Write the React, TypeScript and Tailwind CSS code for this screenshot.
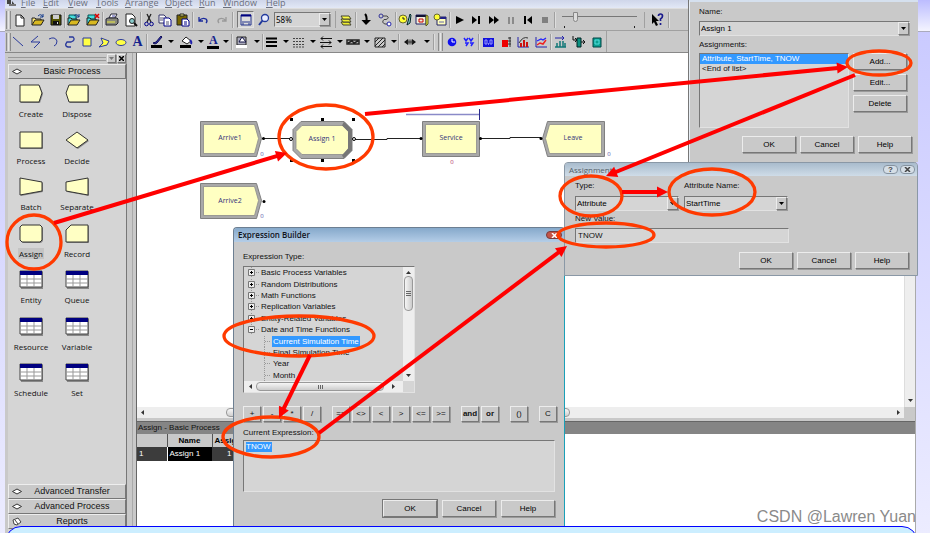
import React from "react";

const UI = "font-['Liberation_Sans',sans-serif]";
const RAISED =
  "border border-t-[#ececec] border-l-[#ececec] border-r-[#777] border-b-[#777] bg-[#c9c9c9] shadow-[1px_1px_0_#9a9a9a]";
const SUNKEN =
  "border border-t-[#777] border-l-[#777] border-r-[#e2e2e2] border-b-[#e2e2e2] bg-[#d5d5d5]";

/* ---------- small parts ---------- */

function Ico({ children, w = 16 }: { children: React.ReactNode; w?: number }) {
  return (
    <svg width={w} height="16" viewBox={`0 0 ${w} 16`} fill="none" aria-hidden="true">
      {children}
    </svg>
  );
}

function Tool({ name, children }: { name: string; children: React.ReactNode }) {
  return (
    <button type="button" aria-label={name} className="flex h-4 shrink-0 items-center justify-center">
      {children}
    </button>
  );
}

function Group({ w, children }: { w: string; children: React.ReactNode }) {
  return (
    <div className={`flex h-4 shrink-0 items-center justify-around border-r border-[#a0a0a0] shadow-[1px_0_0_#dedede] ${w}`}>
      {children}
    </div>
  );
}

function Grip() {
  return (
    <div className="flex h-[18px] shrink-0 gap-px">
      <span className="w-px bg-[#8c8c8c]" />
      <span className="w-px bg-[#e6e6e6]" />
      <span className="w-px bg-[#8c8c8c]" />
    </div>
  );
}

function Drop({ name }: { name: string }) {
  return (
    <Tool name={`${name} options`}>
      <Ico w={6}>
        <path d="M0 6h6L3 9z" fill="#000" />
      </Ico>
    </Tool>
  );
}

function Btn({ children, className = "w-[54px]" }: { children: React.ReactNode; className?: string }) {
  return (
    <button type="button" className={`flex h-[17px] items-center justify-center text-[8px] text-black ${RAISED} ${className}`}>
      {children}
    </button>
  );
}

function Combo({ id, value, className }: { id: string; value: string; className: string }) {
  return (
    <div className={`flex h-[15px] items-stretch ${SUNKEN} ${className}`}>
      <select id={id} defaultValue={value} className="min-w-0 flex-1 appearance-none bg-transparent pl-px text-[8px] leading-[13px] text-black outline-none">
        <option>{value}</option>
      </select>
      <span className={`flex w-[11px] items-center justify-center ${RAISED}`}>
        <svg width="5" height="3" aria-hidden="true">
          <path d="M0 0h5L2.500 3z" fill="#000" />
        </svg>
      </span>
    </div>
  );
}

/* ---------- toolbars ---------- */

const menus = ["File", "Edit", "View", "Tools", "Arrange", "Object", "Run", "Window", "Help"];

function MenuBar() {
  return (
    <nav className="flex h-2 shrink-0 items-end overflow-hidden bg-gradient-to-b from-[#cfd6ea] to-[#e2e8f6] pl-px font-['Open_Sans','Noto_Sans',sans-serif] text-[9px] leading-[10px] text-[#6b6f7c]">
      <svg width="12" height="8" viewBox="0 0 12 8" className="mr-[3px]" aria-hidden="true">
        <path d="M1 0h4v4H1zM6 1l4 5H6z" fill="#444" />
        <path d="M3 4h7v2H3z" fill="#777" />
      </svg>
      <div className="grid grid-cols-[22px_25px_28px_29px_40px_34px_24px_43px_24px]">
        {menus.map((m) => (
          <button key={m} type="button" className="text-left">
            <span className="underline">{m[0]}</span>
            {m.slice(1)}
          </button>
        ))}
      </div>
    </nav>
  );
}

function FolderArt({ flag }: { flag?: "arrow" | "cross" }) {
  return (
    <>
      {flag && <path d="M3 3h7v6H3z" fill="#4dd" stroke="#055" />}
      <path d="M2 13V6h3l1 1h5v2" fill={flag ? "#4dd" : "#ffe97a"} stroke="#222" />
      <path d="M2 13l3-5h9l-3 5z" fill="#d8b820" stroke="#222" />
      {flag === "cross" ? (
        <path d="M10 2l4 4M14 2l-4 4" stroke="#d00" strokeWidth="1.500" />
      ) : (
        <path d="M8 4q3-3 5 1M13 2v3h-3" stroke="#123a8c" />
      )}
    </>
  );
}

function StandardBar() {
  return (
    <div className="flex h-[22px] shrink-0 items-center border-t border-[#dedede] pl-px">
      <Grip />
      <Group w="w-[54px]">
        <Tool name="New"><Ico w={14}><path d="M3 3h5l3 3v8H3z" fill="#fff" stroke="#222" /><path d="M8 3v3h3" stroke="#222" /></Ico></Tool>
        <Tool name="Open"><Ico><FolderArt /></Ico></Tool>
        <Tool name="Save"><Ico w={14}><path d="M2 3h10v10H2z" fill="#555500" stroke="#111" /><path d="M4 3h6v4H4z" fill="#ccc" /><path d="M4 9h6v4H4z" fill="#111" /><path d="M8 10h1v2H8z" fill="#ddd" /></Ico></Tool>
      </Group>
      <Group w="w-[38px]">
        <Tool name="Attach template"><Ico><FolderArt flag="arrow" /></Ico></Tool>
        <Tool name="Detach template"><Ico><FolderArt flag="cross" /></Ico></Tool>
      </Group>
      <Group w="w-[38px]">
        <Tool name="Print"><Ico><path d="M5 6l2-4h6l-2 4z" fill="#fff" stroke="#223" /><path d="M2 7l2-1h9l1 1v4l-2 2H2z" fill="#88887a" stroke="#223" /><path d="M3 10h8" stroke="#ee4" /><path d="M8 4h3" stroke="#44a" /></Ico></Tool>
        <Tool name="Print preview"><Ico><path d="M3 2h6l3 3v9H3z" fill="#fff" stroke="#222" /><circle cx="9" cy="9" r="2.500" fill="#8cc" stroke="#222" /><path d="M11 11l3 3" stroke="#111" strokeWidth="2" /></Ico></Tool>
      </Group>
      <Group w="w-[52px]">
        <Tool name="Cut"><Ico w={14}><path d="M5 2l4 8M9 2l-4 8" stroke="#222" strokeWidth="1.300" /><circle cx="4.500" cy="12" r="1.800" stroke="#008" /><circle cx="9.500" cy="12" r="1.800" stroke="#008" /></Ico></Tool>
        <Tool name="Copy"><Ico><path d="M2 3h5l2 2v6H2z" fill="#fff" stroke="#336" /><path d="M7 6h5l2 2v6H7z" fill="#fff" stroke="#008" /><path d="M3 6h4M3 8h3M9 10h3M9 12h3" stroke="#557" /></Ico></Tool>
        <Tool name="Paste"><Ico><path d="M2 3h10v10H2z" fill="#776600" stroke="#222" /><path d="M5 2h4v2H5z" fill="#ee8" stroke="#222" /><path d="M7 7h5l2 2v5H7z" fill="#fff" stroke="#008" /><path d="M9 10h3M9 12h3" stroke="#008" /></Ico></Tool>
      </Group>
      <Group w="w-[40px]">
        <Tool name="Undo"><Ico w={14}><path d="M3 5v4h4M3 9q3-4 7-2 2 2 0 4" stroke="#1a2a9c" strokeWidth="1.300" /></Ico></Tool>
        <Tool name="Redo"><Ico w={14}><path d="M11 5v4H7M11 9Q8 5 4 7q-2 2 0 4" stroke="#999" strokeWidth="1.300" /></Ico></Tool>
      </Group>
      <div className="flex w-[103px] shrink-0 items-center border-r border-[#a0a0a0] pl-1">
        <button type="button" aria-label="Split view" className={`flex h-[17px] w-[17px] items-center justify-center ${SUNKEN}`}>
          <Ico w={14}><path d="M2 3h10v10H2z" fill="#ddd" stroke="#22338c" /><path d="M2 3.500h10" stroke="#000080" strokeWidth="2" /><path d="M3 10h8M4 11v2M10 11v2" stroke="#22338c" /></Ico>
        </button>
        <label htmlFor="zoom" aria-label="Zoom" className="flex w-5 justify-center">
          <Ico><circle cx="9" cy="6" r="3.500" fill="#e8ecff" stroke="#223a9c" strokeWidth="1.300" /><path d="M6.500 8.500L3 13" stroke="#223a9c" strokeWidth="2" /></Ico>
        </label>
        <Combo id="zoom" value="58%" className="w-[57px]" />
      </div>
      <Group w="w-[20px]">
        <Tool name="Layers"><Ico><path d="M3 10h8l2 3H5z" fill="#ee3" stroke="#443" /><path d="M3 7h8l2 3H5z" fill="#ee3" stroke="#443" /><path d="M3 4h8l2 3H5z" fill="#ff4" stroke="#443" /></Ico></Tool>
      </Group>
      <Group w="w-[40px]">
        <Tool name="Submodel"><Ico><path d="M7 2q2 2 1.500 7" stroke="#000" strokeWidth="2" /><path d="M3.500 8L8 13l5-5H9z" fill="#000" /></Ico></Tool>
        <Tool name="Connect"><Ico><circle cx="4" cy="4" r="2" stroke="#339" /><path d="M6 4h4q3 2-1 3.500H7q-3 3 1 4.500h3" stroke="#444" /><circle cx="12" cy="12" r="2" fill="#fff" stroke="#22a" /></Ico></Tool>
      </Group>
      <Group w="w-[54px]">
        <Tool name="Time patterns"><Ico><circle cx="6" cy="7" r="4" fill="#ff3" stroke="#663" /><path d="M6 5v2h2" stroke="#222" /><path d="M13 2l-3 11 3-2 1-8z" fill="#8cc" stroke="#022" /></Ico></Tool>
        <Tool name="Calendar"><Ico><path d="M2 3h10v9H2z" fill="#eed" stroke="#226" /><path d="M2 4h10" stroke="#113" strokeWidth="2" /><path d="M5 7h4v3H5z" stroke="#c00" /><path d="M12 3v11l2-2V4z" fill="#ff3" stroke="#552" /></Ico></Tool>
        <Tool name="Schedule"><Ico><path d="M5 5h9v8H5z" fill="#ffb" stroke="#226" /><path d="M5 6h9" stroke="#228" strokeWidth="2" /><circle cx="5" cy="5" r="3" fill="#ff3" stroke="#663" /><path d="M7 10h5" stroke="#66a" /></Ico></Tool>
      </Group>
      <Group w="w-[105px]">
        <Tool name="Go"><Ico w={14}><path d="M4 4l8 4-8 4z" fill="#000" /></Ico></Tool>
        <Tool name="Step"><Ico w={14}><path d="M3 4l5 4-5 4zM9 4h2v8H9z" fill="#000" /></Ico></Tool>
        <Tool name="Fast forward"><Ico w={14}><path d="M3 4l5 4-5 4zM8 4l5 4-5 4z" fill="#000" /></Ico></Tool>
        <Tool name="Pause"><Ico w={14}><path d="M4 5h2v7H4zM8 5h2v7H8z" fill="#8a8a8a" /></Ico></Tool>
        <Tool name="Start over"><Ico w={14}><path d="M11 4L6 8l5 4zM3 4h2v8H3z" fill="#000" /></Ico></Tool>
        <Tool name="End"><Ico w={14}><path d="M4 5h6v6H4z" fill="#808080" /></Ico></Tool>
      </Group>
      <div className="flex h-4 w-[90px] shrink-0 flex-col justify-between border-r border-[#a0a0a0] px-[7px]">
        <input
          type="range"
          aria-label="Animation speed"
          min={0}
          max={100}
          defaultValue={15}
          className="h-2.5 w-full appearance-none bg-[linear-gradient(#777,#777)] bg-[length:100%_1px] bg-center bg-no-repeat [&::-webkit-slider-thumb]:h-2.5 [&::-webkit-slider-thumb]:w-[5px] [&::-webkit-slider-thumb]:appearance-none [&::-webkit-slider-thumb]:rounded-b-sm [&::-webkit-slider-thumb]:border [&::-webkit-slider-thumb]:border-[#888] [&::-webkit-slider-thumb]:bg-[#ddd]"
        />
        <div className="flex justify-between px-[2px]">
          <span className="h-[2px] w-px bg-[#222]" />
          <span className="h-[2px] w-px bg-[#222]" />
        </div>
      </div>
      <Group w="w-[24px]">
        <Tool name="Context help"><Ico><path d="M3 2v10l2-2 2 4 2-1-2-4h3z" fill="#000" /><path d="M9.500 4q0-2 2-2t2 2-2 3v2M11.500 11v2" stroke="#1a1a8c" strokeWidth="1.700" /></Ico></Tool>
      </Group>
    </div>
  );
}

function LinesArt({ kind }: { kind: number }) {
  if (kind === 0) return <path d="M2 4.500h11M2 8h11M2 12h11" stroke="#000" strokeWidth="2" />;
  if (kind === 1) return <path d="M2 4.500h11M2 7.500h11M2 10.500h11M2 13h11" stroke="#444" strokeDasharray="2 1" />;
  if (kind === 2) return <path d="M3 4.500h11M2 8.500h11M3 12.500h11M5 2.500l-2 2 2 2M11 6.500l2 2-2 2M5 10.500l-2 2 2 2" stroke="#111" />;
  if (kind === 3) return <path d="M2 6h12v4H2zM3 9l4-2 2 2 4-2" stroke="#222" strokeWidth="1.500" />;
  return <path d="M3 4h10v9H3zM3 8l4-4M3 12l8-8M6 13l7-7M10 13l3-3" stroke="#222" />;
}

function DrawBar() {
  return (
    <div className="flex h-[22px] shrink-0 items-center border-t border-[#a0a0a0] pl-px">
      <Grip />
      <Group w="w-[136px]">
        <Tool name="Line"><Ico><path d="M2 3l10 9" stroke="#2a3a9c" /></Ico></Tool>
        <Tool name="Polyline"><Ico><path d="M10 2L3 8h9l-6 6" stroke="#2a3a9c" /></Ico></Tool>
        <Tool name="Arc"><Ico><path d="M4 5q6-3 8 2 0 4-3 5" stroke="#2a3a9c" /></Ico></Tool>
        <Tool name="Bezier"><Ico><path d="M7 3h4q3 3-2 5H5q-3 4 1 5h3" stroke="#2a3a9c" strokeWidth="1.300" /></Ico></Tool>
        <Tool name="Box"><Ico><path d="M4 4h8v8H4z" fill="#ff4" stroke="#2a3a9c" /></Ico></Tool>
        <Tool name="Polygon"><Ico><path d="M5 4l8 3-2 4-8 2 4-4z" fill="#ff4" stroke="#2a3a9c" /></Ico></Tool>
        <Tool name="Ellipse"><Ico><ellipse cx="8" cy="8.500" rx="5" ry="3" fill="#ff4" stroke="#2a3a9c" /></Ico></Tool>
        <Tool name="Text"><span className="w-4 text-center font-['Liberation_Serif',serif] text-[14px] font-bold leading-4 text-[#14228c]">A</span></Tool>
      </Group>
      <Group w="w-[85px]">
        <Tool name="Line color"><Ico><path d="M12 2l-5 6-3 1 2 1 2-1 5-6z" fill="#33b" stroke="#115" /><path d="M2 11h11v3H2z" fill="#000" /></Ico></Tool>
        <Drop name="Line color" />
        <Tool name="Fill color"><Ico><path d="M4 7l4-4 5 4-4 3z" fill="#fff" stroke="#222" /><path d="M12 6q2 2 1 4" stroke="#22a" strokeWidth="2" /><path d="M2 11h11v3H2z" fill="#000" /></Ico></Tool>
        <Drop name="Fill color" />
        <Tool name="Text color">
          <span className="h-[14px] w-3 border-b-[3px] border-black text-center font-['Liberation_Serif',serif] text-[12px] font-bold leading-[11px] text-[#14228c]">A</span>
        </Tool>
        <Drop name="Text color" />
      </Group>
      <Group w="w-[31px]">
        <Tool name="Window background"><Ico><path d="M3 3h9v8H3z" fill="#aab" stroke="#222" /><path d="M5 8l3-5 4 5z" fill="#fff" stroke="#114" /><path d="M2 11h11v3H2z" fill="#fff" /></Ico></Tool>
        <Drop name="Window background" />
      </Group>
      <Group w="w-[136px]">
        {["Line width", "Line style", "Arrow style", "Line pattern", "Fill pattern"].map((n, i) => (
          <React.Fragment key={n}>
            <Tool name={n}><Ico><LinesArt kind={i} /></Ico></Tool>
            <Drop name={n} />
          </React.Fragment>
        ))}
      </Group>
      <Group w="w-[35px]">
        <Tool name="Text on"><Ico><path d="M2 8l4-3v6zM14 8l-4-3v6z" fill="#111" /><path d="M7 5.500v5M9 5.500v5M5 8h6" stroke="#333" /></Ico></Tool>
        <Drop name="Text on" />
      </Group>
      <div className="w-[4px]" />
      <Grip />
      <Group w="w-[36px]">
        <Tool name="Clock"><Ico w={14}><circle cx="7" cy="8" r="4.300" fill="#11e" /><path d="M7 5v3h3" stroke="#fff" /></Ico></Tool>
        <Tool name="Date"><Ico w={14}><path d="M2 4l2 3 2-3M7 4l2 3 2-3M3 9h3l-2 3M8 9h3l-2 3" stroke="#22f" strokeWidth="1.500" /></Ico></Tool>
      </Group>
      <Group w="w-[72px]">
        <Tool name="Variable"><Ico w={14}><path d="M2 4h11v9H2z" fill="#11d" /><path d="M4 6h2v4H4zM9 6h2v4H9z" stroke="#99f" /><path d="M7 10h1" stroke="#fff" /></Ico></Tool>
        <Tool name="Level"><Ico w={14}><path d="M3 6h6v7H3z" fill="#e00" /><path d="M11 3v10M9 4h3M9 7h3M9 10h3" stroke="#333" /></Ico></Tool>
        <Tool name="Histogram"><Ico w={14}><path d="M2 3v10h11" stroke="#22a" /><path d="M5 9v4M8 6v7M11 8v5" stroke="#c11" strokeWidth="2" /><path d="M3 9q4-7 9-5" stroke="#333" /></Ico></Tool>
        <Tool name="Plot"><Ico w={14}><path d="M2 3v10h11" stroke="#22a" /><path d="M3 7l4-2 2 1 3-2" stroke="#22f" strokeWidth="1.300" /><path d="M3 11l3-2 3 1 3-4" stroke="#e22" strokeWidth="1.500" /></Ico></Tool>
      </Group>
      <div className="flex h-[21px] w-[56px] shrink-0 items-center justify-around border-r border-[#a0a0a0]">
        <Tool name="Queue"><Ico w={14}><path d="M2 4h9M9 2l2 2-2 2" stroke="#22a" /><path d="M2 13h11M4 9v4M7 7v6M10 7v6M12 9v4" stroke="#177" strokeWidth="1.500" /></Ico></Tool>
        <Tool name="Resource"><Ico w={14}><path d="M2 2v4h3M4 4l2 2-2 2M10 8h3M12 6l2 2-2 2" stroke="#111" /><path d="M6 4h4v9H6z" fill="#0a9080" stroke="#022" /></Ico></Tool>
        <Tool name="Global"><Ico w={14}><path d="M3 4h8v9H3z" fill="#0aa090" stroke="#044" /><path d="M5 6h4v4H5z" stroke="#5dd" /></Ico></Tool>
      </div>
    </div>
  );
}

/* ---------- project bar ---------- */

const modules: [string, string][] = [
  ["Create", "M1 1h19l3 8-3 9H1z"],
  ["Dispose", "M4 1h19v17H4L1 9z"],
  ["Process", "M1 1h22v16H1z"],
  ["Decide", "M12 1l11 8-11 8L1 9z"],
  ["Batch", "M1 1l22 4v9L1 18z"],
  ["Separate", "M23 1v17L1 14V5z"],
  ["Assign", "M3 1h18l2 2v13l-2 2H3l-2-2V3z"],
  ["Record", "M6 1h17v17H1V6z"],
  ["Entity", ""],
  ["Queue", ""],
  ["Resource", ""],
  ["Variable", ""],
  ["Schedule", ""],
  ["Set", ""],
];

function ModuleIcon({ d }: { d: string }) {
  return (
    <svg width="25" height="20" viewBox="0 0 25 20" aria-hidden="true">
      {d ? (
        <>
          <path d={d} fill="#888" transform="translate(1 1)" />
          <path d={d} fill="#ffffc4" stroke="#333" />
        </>
      ) : (
        <>
          <path d="M2 2h22v17H2z" fill="#888" />
          <path d="M1 1h22v16H1z" fill="#fff" stroke="#444" />
          <path d="M1 1h22v4H1z" fill="#000080" />
          <path d="M1 9h22M1 13h22M8 5v12M15 5v12" stroke="#999" />
        </>
      )}
    </svg>
  );
}

function PanelTab({ children, report = false }: { children: React.ReactNode; report?: boolean }) {
  return (
    <button type="button" className="flex h-[15px] w-full shrink-0 items-center border border-t-[#eee] border-l-[#eee] border-r-[#777] border-b-[#777] bg-[#c9c9c9] px-[3px] text-[9px] text-[#111]">
      <svg width="10" height="9" viewBox="0 0 10 9" className="shrink-0" aria-hidden="true">
        {report ? (
          <path d="M1 3l5-2 3 4-4 3-3-1zM3 3l3 4" fill="#fff" stroke="#444" />
        ) : (
          <path d="M0.500 4.500L5 2l4.500 2.500L5 7z" fill="#fff" stroke="#333" />
        )}
      </svg>
      <span className="flex-1 text-center">{children}</span>
    </button>
  );
}

function ProjectBar() {
  return (
    <aside className="flex w-[119px] shrink-0 flex-col border-r border-[#777] bg-[#d5d5d5] font-['Liberation_Sans',sans-serif]">
      <div className="flex h-[11px] shrink-0 items-center gap-px bg-[#c9c9c9]">
        <div className="h-[4px] flex-1 border-y border-[#999]" />
        <button type="button" aria-label="Panel menu" className={`flex h-[9px] w-[9px] items-center justify-center ${RAISED}`}>
          <svg width="5" height="3" aria-hidden="true"><path d="M0 0h5L2.500 3z" fill="#777" /></svg>
        </button>
        <button type="button" aria-label="Close panel" className={`flex h-[9px] w-[9px] items-center justify-center ${RAISED}`}>
          <svg width="5" height="5" aria-hidden="true"><path d="M0 0l5 5M5 0L0 5" stroke="#000" strokeWidth="1.500" /></svg>
        </button>
      </div>
      <PanelTab>Basic Process</PanelTab>
      <ul className="grid h-[331px] grid-cols-[46px_46px] grid-rows-7 pt-[5px] font-['Open_Sans','Noto_Sans',sans-serif] text-[8px] leading-[11px] text-[#111]">
        {modules.map(([name, d]) => (
          <li key={name} className="flex flex-col items-center gap-1">
            <ModuleIcon d={d} />
            <span className={name === "Assign" ? "bg-[#c4c4c4] px-px" : ""}>{name}</span>
          </li>
        ))}
      </ul>
      <div className="flex-1" />
      <PanelTab>Advanced Transfer</PanelTab>
      <PanelTab>Advanced Process</PanelTab>
      <PanelTab report>Reports</PanelTab>
      <div className="h-1 shrink-0" />
    </aside>
  );
}

/* ---------- model canvas ---------- */

function Block({ outer, inner, label, x, y }: { outer: string; inner: string; label: string; x: number; y: number }) {
  return (
    <g>
      <path d={outer} fill="#a9a9a9" stroke="#808080" />
      <path d={inner} fill="#ffffc2" stroke="#8c8c8c" strokeWidth="0.800" />
      <text x={x} y={y} textAnchor="middle" fontSize="7" fill="#33337a">
        {label}
      </text>
    </g>
  );
}

function Model() {
  return (
    <svg width="500" height="180" viewBox="137 53 500 180" className="font-['Open_Sans','Noto_Sans',sans-serif]" role="img" aria-label="Process flow">
      <path d="M262 138.500h29M354 139.500h33v-1h35M480 138.500h30v-1h31" stroke="#222" fill="none" />
      <path d="M406 114.500h73" stroke="#8a8ac8" strokeWidth="1.500" />
      <path d="M479.500 109v11" stroke="#2a2a8c" />
      <Block outer="M200.500 121.500h56l5 17-5 18h-56z" inner="M203.500 124.500h51l4 14-4 15h-51z" label="Arrive1" x={230} y={140} />
      <Block outer="M200.500 183.500h56l5 17-5 18h-56z" inner="M203.500 186.500h51l4 14-4 15h-51z" label="Arrive2" x={230} y={203} />
      <Block outer="M301 121.500h43l8 8v21l-8 8h-43l-8-8v-21z" inner="M302 125.500h41l6 6v17l-6 6h-41l-6-6v-17z" label="Assign 1" x={322} y={141} />
      <path d="M344 121.500l8 8v21l-8 8-2-3 6-7v-17l-6-6z" fill="#777" />
      <Block outer="M422.500 121.500h57v35h-57z" inner="M425.500 124.500h51v29h-51z" label="Service" x={451} y={140} />
      <Block outer="M547.500 121.500h57v35h-57l-5-18z" inner="M549.500 124.500h52v29h-52l-4-15z" label="Leave" x={573} y={140} />
      <g fill="#000">
        {[291, 322, 353].map((x) => (
          <path key={x} d={`M${x - 1} 118h3v3h-3zM${x - 1} 159h3v3h-3z`} />
        ))}
        <circle cx="263.500" cy="138.500" r="1.500" />
        <circle cx="264" cy="201.500" r="1.500" />
        <circle cx="421" cy="138.500" r="1.500" />
        <circle cx="480.500" cy="138.500" r="1.500" />
        <circle cx="541" cy="138.500" r="1.500" />
      </g>
      <circle cx="291" cy="139" r="1.500" fill="#fff" stroke="#000" />
      <circle cx="354" cy="139" r="1.500" fill="#fff" stroke="#000" />
      <g fontSize="6" textAnchor="middle" fill="#5555a8">
        <text x="262" y="156">0</text>
        <text x="262" y="218">0</text>
        <text x="609" y="156">0</text>
        <text x="452" y="164" fill="#b03060">0</text>
      </g>
    </svg>
  );
}

function Arrow({ dir }: { dir: "left" | "right" | "up" | "down" }) {
  const d = {
    left: "M5 1v5L2 3.500z",
    right: "M2 1v5l3-2.500z",
    up: "M1 5h5L3.500 2z",
    down: "M1 2h5L3.500 5z",
  }[dir];
  return (
    <svg width="7" height="7" viewBox="0 0 7 7" className="shrink-0" aria-hidden="true">
      <path d={d} fill="#333" />
    </svg>
  );
}

function Workspace() {
  return (
    <main className="flex min-w-0 flex-1 flex-col border-l border-[#666] bg-[#c9c9c9]">
      <div className="flex h-[354px] shrink-0">
        <div className="min-w-0 flex-1 overflow-hidden bg-white">
          <Model />
        </div>
        <div className="flex w-[11px] shrink-0 flex-col items-center justify-end border-l border-[#ddd] bg-[#eee] pb-[3px]">
          <Arrow dir="down" />
        </div>
      </div>
      <div className="flex h-[11px] shrink-0">
        <div className="flex min-w-0 flex-1 items-center bg-[#eee] px-[2px]">
          <Arrow dir="left" />
          <span className="ml-[80px] h-[9px] w-[344px] rounded-sm border border-[#999] bg-gradient-to-b from-[#f8f8f8] to-[#d0d0d0]" />
          <span className="flex-1" />
          <Arrow dir="right" />
        </div>
        <div className="w-[11px]" />
      </div>
      <div className="mt-[3px] h-[13px] shrink-0 border-t border-[#666] bg-[#858585] pl-px font-['Liberation_Sans',sans-serif] text-[8px] leading-[12px] text-[#111]">Assign - Basic Process</div>
      <div className="min-h-0 flex-1 overflow-hidden bg-white font-['Liberation_Sans',sans-serif]">
        <table className="table-fixed border-collapse text-[8px] leading-[12px]">
          <thead>
            <tr className="h-[13px] bg-[#c9c9c9] text-left text-black">
              <th className="w-[30px] border-r border-[#555]" aria-label="Row" />
              <th className="w-[45px] border-r border-[#555] text-center">Name</th>
              <th className="w-[60px] pl-[2px]">Assignments</th>
            </tr>
          </thead>
          <tbody>
            <tr className="h-[14px] bg-[#3c3c3c] text-white">
              <td className="border-r border-white pl-[2px]">1</td>
              <td className="bg-black pl-[2px]">Assign 1</td>
              <td className="pl-[15px]">1</td>
            </tr>
          </tbody>
        </table>
      </div>
    </main>
  );
}

/* ---------- dialogs ---------- */

function AssignDialog() {
  return (
    <section aria-label="Assign" className={`absolute left-[689px] top-0 h-[162px] w-[229px] border-l border-[#e8eef4] border-t-2 border-t-[#d5e0ee] bg-[#c9c9c9] pl-[9px] pr-[6px] pt-[4px] text-[8px] leading-[12px] text-[#111] shadow-[-1px_0_0_#777] ${UI}`}>
      <label htmlFor="assign-name" className="block h-[15px]">Name:</label>
      <Combo id="assign-name" value="Assign 1" className="w-[211px]" />
      <label htmlFor="assign-list" className="mt-[3px] block h-[14px]">Assignments:</label>
      <div className="flex gap-[4px]">
        <ul id="assign-list" role="listbox" aria-label="Assignments" className={`h-[75px] w-[150px] leading-[10px] ${SUNKEN}`}>
          <li role="option" aria-selected="true" className="bg-[#3399ff] pl-[2px] text-white">Attribute, StartTime, TNOW</li>
          <li role="option" aria-selected="false" className="pl-[2px]">&lt;End of list&gt;</li>
        </ul>
        <div className="flex flex-col gap-[4px]">
          <Btn>Add...</Btn>
          <Btn>Edit...</Btn>
          <Btn>Delete</Btn>
        </div>
      </div>
      <div className="mt-[8px] flex justify-end gap-[4px]">
        <Btn>OK</Btn>
        <Btn>Cancel</Btn>
        <Btn>Help</Btn>
      </div>
    </section>
  );
}

function AssignmentsDialog() {
  return (
    <section aria-label="Assignments" className={`absolute left-[564px] top-[162px] h-[114px] w-[354px] overflow-hidden rounded-t border border-[#8a98a6] bg-[#c9c9c9] text-[8px] leading-[12px] text-[#111] ${UI}`}>
      <header className="flex h-[13px] items-center justify-between bg-gradient-to-b from-[#a9bccd] to-[#cfdce8] pl-1 pr-[2px]">
        <h2 className="font-['Open_Sans','Noto_Sans',sans-serif] text-[8px] text-[#555f6a]">Assignments</h2>
        <div className="flex gap-[2px]">
          <button type="button" aria-label="Help" className="flex h-[9px] w-[15px] items-center justify-center rounded-sm border border-[#8593a0] bg-[#d5dee6] text-[8px] font-bold leading-none text-[#444]">?</button>
          <button type="button" aria-label="Close" className="flex h-[9px] w-[15px] items-center justify-center rounded-sm border border-[#8593a0] bg-[#d5dee6]">
            <svg width="7" height="5" aria-hidden="true"><path d="M1 0l5 5M6 0L1 5" stroke="#444" strokeWidth="1.500" /></svg>
          </button>
        </div>
      </header>
      <div className="px-[10px] pt-[4px]">
        <div className="flex gap-[4px]">
          <div className="w-[105px]">
            <label htmlFor="type" className="block h-[16px]">Type:</label>
            <Combo id="type" value="Attribute" className="w-[104px]" />
          </div>
          <div className="w-[105px]">
            <label htmlFor="attr" className="block h-[16px]">Attribute Name:</label>
            <Combo id="attr" value="StartTime" className="w-[104px]" />
          </div>
        </div>
        <label htmlFor="newvalue" className="mt-[2px] block h-[15px]">New Value:</label>
        <input id="newvalue" defaultValue="TNOW" className={`block h-[15px] w-[214px] pl-[2px] text-[8px] outline-none ${SUNKEN}`} />
      </div>
      <div className="mt-[9px] flex justify-end gap-[4px] pr-[8px]">
        <Btn>OK</Btn>
        <Btn>Cancel</Btn>
        <Btn>Help</Btn>
      </div>
    </section>
  );
}

const tree = [
  { t: "Basic Process Variables", k: "+" },
  { t: "Random Distributions", k: "+" },
  { t: "Math Functions", k: "+" },
  { t: "Replication Variables", k: "+" },
  { t: "Entity-Related Variables", k: "+" },
  { t: "Date and Time Functions", k: "-" },
  { t: "Current Simulation Time", k: "" },
  { t: "Final Simulation Time", k: "" },
  { t: "Year", k: "" },
  { t: "Month", k: "" },
];

const operators = [["+", "-", "*", "/"], ["==", "<>", "<", ">", "<=", ">="], ["and", "or"], ["()"], ["C"]];

function ExpressionBuilder() {
  return (
    <section aria-label="Expression Builder" className={`absolute left-[233px] top-[227px] h-[310px] w-[332px] overflow-hidden rounded-t border border-[#6d7f92] border-r-[#1aa0b8] bg-[#c9c9c9] text-[8px] leading-[12px] text-[#111] ${UI}`}>
      <header className="flex h-[14px] items-center justify-between bg-gradient-to-b from-[#86a9cb] to-[#b4cde7] pl-1 pr-[2px]">
        <h2 className="font-['Open_Sans','Noto_Sans',sans-serif] text-[8px] font-semibold text-[#10131a]">Expression Builder</h2>
        <button type="button" aria-label="Close" className="flex h-[8px] w-[16px] items-center justify-center rounded-sm border border-[#7a3a3a] bg-[#c45548]">
          <svg width="7" height="5" aria-hidden="true"><path d="M1 0l5 5M6 0L1 5" stroke="#fff" strokeWidth="1.500" /></svg>
        </button>
      </header>
      <div className="px-[9px] pt-[9px]">
        <p className="h-[15px]">Expression Type:</p>
        <div className={`h-[127px] w-[172px] ${SUNKEN}`}>
          <div className="flex h-[114px]">
            <ul className="flex min-w-0 flex-1 flex-col pl-[4px]">
              {tree.map((n) => (
                <li key={n.t} className="flex flex-1 items-center whitespace-nowrap leading-[11px]">
                  {n.k ? (
                    <svg width="12" height="11" viewBox="0 0 12 11" className="shrink-0" aria-hidden="true">
                      <path d="M8 5.500h4M3.500 0v2M3.500 9v2" stroke="#999" strokeDasharray="1 1" />
                      <path d="M0.500 2.500h6v6h-6z" fill="#eee" stroke="#777" />
                      <path d={n.k === "+" ? "M2 5.500h3M3.500 4v3" : "M2 5.500h3"} stroke="#000" />
                    </svg>
                  ) : (
                    <svg width="24" height="11" viewBox="0 0 24 11" className="shrink-0" aria-hidden="true">
                      <path d="M16.500 0v11M17 5.500h6" stroke="#999" strokeDasharray="1 1" />
                    </svg>
                  )}
                  <span className={n.t === "Current Simulation Time" ? "bg-[#3399ff] px-px text-white" : "px-px"}>{n.t}</span>
                </li>
              ))}
            </ul>
            <div className="flex w-[11px] flex-col items-center justify-between bg-[#eee] py-[2px]">
              <Arrow dir="up" />
              <span className="mb-[61px] flex h-[36px] w-[9px] flex-col items-center justify-center gap-px rounded-sm border border-[#999] bg-gradient-to-r from-[#f6f6f6] to-[#ccc]">
                <i className="h-px w-[5px] bg-[#666]" />
                <i className="h-px w-[5px] bg-[#666]" />
                <i className="h-px w-[5px] bg-[#666]" />
              </span>
              <Arrow dir="down" />
            </div>
          </div>
          <div className="flex h-[11px]">
            <div className="flex flex-1 items-center bg-[#eee] pl-[3px]">
              <Arrow dir="left" />
              <span className="ml-[2px] flex h-[9px] w-[128px] items-center justify-center gap-px rounded-sm border border-[#999] bg-gradient-to-b from-[#f6f6f6] to-[#ccc]">
                <i className="h-[4px] w-px bg-[#666]" />
                <i className="h-[4px] w-px bg-[#666]" />
                <i className="h-[4px] w-px bg-[#666]" />
              </span>
              <span className="flex flex-1 justify-center"><Arrow dir="right" /></span>
            </div>
            <div className="w-[11px]" />
          </div>
        </div>
        <div className="mt-[13px] flex gap-[11px]">
          {operators.map((g) => (
            <div key={g[0]} className="flex gap-[2px]">
              {g.map((o) => (
                <button key={o} type="button" className={`flex h-[16px] w-[18px] items-center justify-center text-[8px] ${g[0] === "and" ? "font-bold" : ""} ${RAISED}`}>
                  {o}
                </button>
              ))}
            </div>
          ))}
        </div>
        <label htmlFor="expr" className="mt-[5px] block h-[13px]">Current Expression:</label>
        <div className={`relative h-[52px] ${SUNKEN}`}>
          <span className="absolute left-[2px] top-px h-[10px] w-[26px] bg-[#3399ff]" />
          <textarea id="expr" defaultValue="TNOW" className="relative block h-full w-full resize-none bg-transparent pl-[2px] pt-px text-[8px] leading-[10px] text-white outline-none" />
        </div>
        <div className="mt-[8px] flex justify-end gap-[5px]">
          <Btn className="w-[54px] outline outline-1 outline-[#777]">OK</Btn>
          <Btn>Cancel</Btn>
          <Btn>Help</Btn>
        </div>
      </div>
    </section>
  );
}

/* ---------- red annotations ---------- */

const rings = [
  [34, 242, 27, 27],
  [326, 137, 47, 32],
  [879, 63, 32, 12],
  [591, 196, 31, 20],
  [712, 192, 43, 23],
  [606, 235, 48, 12],
  [299, 336, 75, 20],
  [271, 437, 48, 20],
];

const arrows = [
  [54, 223, 287, 153],
  [365, 114, 848, 67],
  [855, 75, 606, 176],
  [622, 192, 668, 192],
  [310, 355, 279, 418],
  [319, 433, 567, 246],
];

function Annotations() {
  return (
    <svg width="930" height="533" viewBox="0 0 930 533" className="pointer-events-none absolute left-0 top-0" aria-hidden="true">
      {rings.map(([cx, cy, rx, ry]) => (
        <ellipse key={`${cx}-${cy}`} cx={cx} cy={cy} rx={rx} ry={ry} fill="none" stroke="#ff3a00" strokeWidth="3.300" />
      ))}
      {arrows.map(([x1, y1, x2, y2]) => {
        const len = Math.hypot(x2 - x1, y2 - y1);
        const angle = (Math.atan2(y2 - y1, x2 - x1) * 180) / Math.PI;
        return (
          <g key={`${x1}-${y1}`} transform={`translate(${x1} ${y1}) rotate(${angle})`} fill="#ff0000">
            <path d={`M0 -2H${len - 10}V2H0z`} />
            <path d={`M${len - 11} -5.500L${len} 0L${len - 11} 5.500z`} />
          </g>
        );
      })}
    </svg>
  );
}

export default function App() {
  return (
    <div className="relative flex h-screen w-full flex-col overflow-hidden bg-gradient-to-b from-[#c8c8ff] to-[#ececff]">
      <div className="absolute inset-x-0 top-0 h-8 border-b border-[#aaaabc] bg-gradient-to-b from-[#bcbcff] to-[#f4f4ff]" />
      <div className="relative ml-[5px] mr-[14px] flex min-h-0 flex-1 flex-col border-r border-[#aaa] bg-[#c9c9c9]">
        <MenuBar />
        <StandardBar />
        <DrawBar />
        <div className="flex min-h-0 flex-1 border-t border-[#888] pl-[3px]">
          <ProjectBar />
          <div className="mr-[3px] w-[6px] shrink-0 border-r border-[#aaa]" />
          <Workspace />
        </div>
      </div>
      <ExpressionBuilder />
      <AssignDialog />
      <AssignmentsDialog />
      <p className="absolute bottom-[6px] right-[14px] font-['Liberation_Sans',sans-serif] text-[16px] leading-5 text-[#8a8a8a]">CSDN @Lawren Yuan</p>
      <div className="absolute -bottom-8 left-[5px] right-[12px] h-[39px] rounded-t-2xl border border-[#0000ff] bg-[#cceeff]" />
      <Annotations />
    </div>
  );
}
